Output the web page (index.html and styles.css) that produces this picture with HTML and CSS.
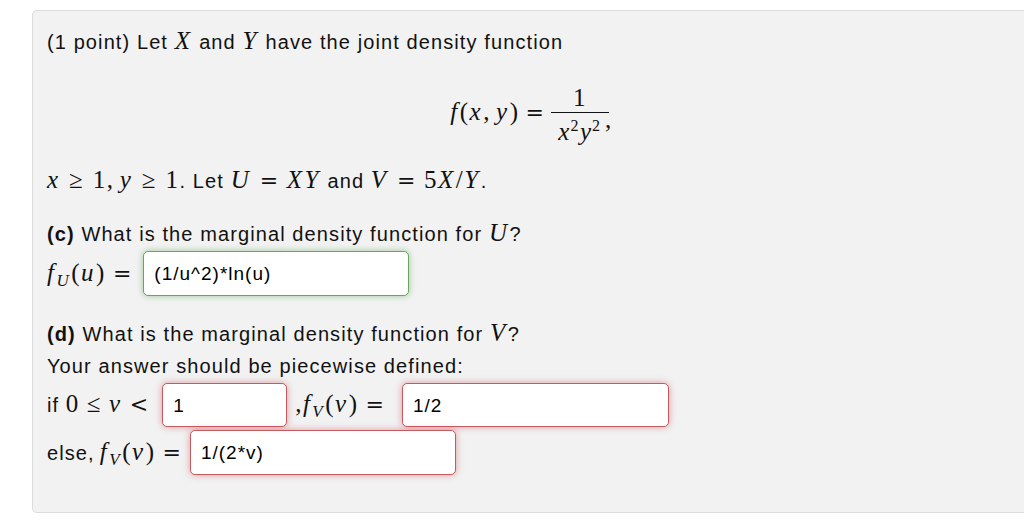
FILE: index.html
```html
<!DOCTYPE html>
<html>
<head>
<meta charset="utf-8">
<link rel="stylesheet" href="styles.css">
</head>
<body>
<div class="panel">
  <p class="line l1">(1 point) Let <span class="m">X</span> and <span class="m">Y</span> have the joint density function</p>
  <div class="display">
    <span class="m">f</span><span class="r">(</span><span class="m">x</span><span class="r">,</span>&thinsp;<span class="m">y</span><span class="r">)</span>
    <span class="wide eq">=</span>
    <span class="frac"><span class="num r">1</span><span class="den"><span class="m">x</span><sup class="r">2</sup><span class="m">y</span><sup class="r">2</sup></span></span><span class="r comma">,</span>
  </div>
  <p class="line l3"><span class="m">x</span><span class="r rel">≥</span><span class="r">1,</span>&thinsp;<span class="m">y</span><span class="r rel">≥</span><span class="r">1</span>. Let <span class="m">U</span><span class="wide rel">=</span><span class="m">XY</span> and <span class="m">V</span><span class="wide rel">=</span><span class="r">5</span><span class="m">X</span><span class="r">/</span><span class="m">Y</span>.</p>
  <p class="line lc"><b>(c)</b> What is the marginal density function for <span class="m">U</span>?</p>
  <div class="row rc">
    <span class="lab"><span class="m">f</span><sub class="m">U</sub><span class="r">(</span><span class="m">u</span><span class="r">)</span><span class="wide rel">=</span></span>
    <span class="inp ok w265">(1/u^2)*ln(u)</span>
  </div>
  <p class="line ld"><b>(d)</b> What is the marginal density function for <span class="m">V</span>?</p>
  <p class="line ly">Your answer should be piecewise defined:</p>
  <div class="row rif">
    <span class="lab">if <span class="r">0</span><span class="r rel">≤</span><span class="m">v</span><span class="wide rel">&lt;</span></span>
    <span class="inp bad w124">1</span>
    <span class="lab lab2"><span class="r">,</span><span class="m">f</span><sub class="m">V</sub><span class="r">(</span><span class="m">v</span><span class="r">)</span><span class="wide rel">=</span></span>
    <span class="inp bad w266">1/2</span>
  </div>
  <div class="row relse">
    <span class="lab">else,&thinsp;<span class="m">f</span><sub class="m">V</sub><span class="r">(</span><span class="m">v</span><span class="r">)</span><span class="wide rel">=</span></span>
    <span class="inp bad w265">1/(2*v)</span>
  </div>
</div>
</body>
</html>
```
FILE: styles.css
```css
html, body {
  margin: 0;
  padding: 0;
  background: #ffffff;
  overflow: hidden;
}
body {
  width: 1024px;
  height: 529px;
  font-family: "Liberation Sans", Arial, sans-serif;
  font-size: 20px;
  letter-spacing: 1.1px;
  color: #111;
}
.panel {
  margin: 10px 0 0 32px;
  width: 1020px;
  height: 503px;
  box-sizing: border-box;
  background: #f2f2f2;
  border: 1px solid #dcdcdc;
  border-right: none;
  border-radius: 5px 0 0 5px;
  padding: 18px 0 0 14px;
}
.line {
  margin: 0;
  line-height: 26px;
}
.m {
  font-family: "Liberation Serif", "Times New Roman", serif;
  font-style: italic;
  font-size: 25px;
  line-height: 20px;
  letter-spacing: 2.5px;
}
.r {
  font-family: "Liberation Serif", "Times New Roman", serif;
  font-size: 25px;
  line-height: 20px;
  letter-spacing: 1.5px;
}
.wide {
  font-family: "DejaVu Serif", "Liberation Serif", serif;
  font-size: 22px;
  line-height: 20px;
  letter-spacing: 0;
}
.rel {
  margin: 0 7px;
}
.l3 .rel {
  margin: 0 8.5px;
}
.display {
  height: 113px;
  padding-right: 36px;
  display: flex;
  justify-content: center;
  align-items: center;
}
.display .eq {
  margin: 2px 7px 0 6px;
}
.frac {
  display: inline-flex;
  flex-direction: column;
  align-items: center;
  margin-top: 8px;
}
.num {
  line-height: 28px;
  padding: 0 4px 0;
  border-bottom: 1px solid #111;
  width: 50px;
  text-align: center;
}
.den {
  line-height: 28px;
  padding: 6px 0 0;
}
.den .m {
  letter-spacing: 1px;
}
.den sup {
  font-size: 16px;
  vertical-align: 9px;
  line-height: 0;
}
.comma {
  margin-top: 16px;
  margin-left: -4px;
}
.lc {
  margin-top: 27px;
}
.row {
  display: flex;
  align-items: center;
  line-height: 26px;
}
.lab {
  white-space: pre;
}
.row sub {
  font-size: 17px;
  vertical-align: -5px;
  line-height: 0;
}
.rc {
  margin: 4px 0 0 0;
}
.rc .lab {
  margin-right: 5px;
}
.inp {
  display: inline-block;
  box-sizing: border-box;
  height: 45px;
  line-height: 43px;
  background: #fff;
  border-radius: 5px;
  padding: 0 10px;
  font-size: 19px;
  letter-spacing: 1px;
  color: #000;
}
.ok {
  border: 1px solid #64a95c;
  box-shadow: 0 0 6px rgba(100, 170, 90, 0.6);
}
.bad {
  border: 1px solid #c55a5f;
  box-shadow: 0 0 7px rgba(205, 80, 90, 0.55);
}
.rif .inp {
  height: 44px;
}
.w265 { width: 266px; }
.w266 { width: 267px; }
.w124 { width: 125px; }
.ld {
  margin-top: 25px;
}
.ly {
  margin-top: 6px;
}
.rif {
  margin-top: 4px;
}
.rif .lab {
  margin-right: 7px;
}
.rif .lab2 {
  margin-left: 8px;
  margin-right: 11px;
}
.relse {
  margin-top: 3px;
}
.relse .lab {
  margin-right: 2px;
}
```
